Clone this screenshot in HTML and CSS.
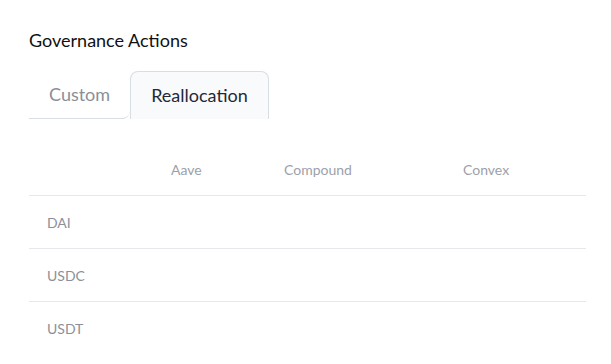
FILE: index.html
```html
<!DOCTYPE html>
<html lang="en">
<head>
  <meta charset="UTF-8">
  <meta name="viewport" content="width=device-width, initial-scale=1.0">
  <title>Governance Actions</title>
  <link rel="stylesheet" href="styles.css">
</head>
<body>

  <div class="container">
    <h2 class="title">Governance Actions</h2>

    <!-- Tabs -->
    <div class="tabs">
      <div class="tab">Custom</div>
      <div class="tab active">Reallocation</div>
    </div>

    <!-- Reallocation Table -->
    <div class="table">
      <div class="row head">
        <div class="cell"></div>
        <div class="cell">Aave</div>
        <div class="cell">Compound</div>
        <div class="cell">Convex</div>
      </div>
      <div class="row">
        <div class="cell">DAI</div>
        <div class="cell"></div>
        <div class="cell"></div>
        <div class="cell"></div>
      </div>
      <div class="row">
        <div class="cell">USDC</div>
        <div class="cell"></div>
        <div class="cell"></div>
        <div class="cell"></div>
      </div>
      <div class="row">
        <div class="cell">USDT</div>
        <div class="cell"></div>
        <div class="cell"></div>
        <div class="cell"></div>
      </div>
    </div>
  </div>

</body>
</html>
```

FILE: styles.css
```css
/* General Page Styles */
body {
  font-family: 'Lato', sans-serif;
  background: #ffffff;
  color: #111111;
  margin: 0;
  padding: 0;
}

.container {
  padding: 28px 25px 0 29px;
}

.title {
  margin: 0;
  font-size: 18px;
  font-weight: 400;
  line-height: 24px;
  color: #111111;
}

/* Tabs */
.tabs {
  display: flex;
  margin-top: 19px;
}

.tab {
  padding: 12px 20px;
  font-size: 18px;
  line-height: 22px;
  color: #8a8f98;
  border-bottom: 1px solid #d8dee6;
  border-bottom-right-radius: 8px;
}

.tab.active {
  color: #1f2937;
  background-color: #f8fafc;
  border: 1px solid #d8dee6;
  border-bottom: none;
  border-radius: 8px 8px 0 0;
  padding-bottom: 13px;
}

/* Table */
.table {
  margin-top: 24px;
}

.row {
  display: grid;
  grid-template-columns: 124px 113px 179px 1fr;
  box-sizing: border-box;
  height: 53px;
  align-items: center;
  border-bottom: 1px solid #e5e7eb;
}

.row:last-child {
  border-bottom: none;
}

.cell {
  padding-left: 18px;
  font-size: 14px;
  color: #8b9099;
}

.row.head .cell {
  color: #9ca1a9;
}
```
